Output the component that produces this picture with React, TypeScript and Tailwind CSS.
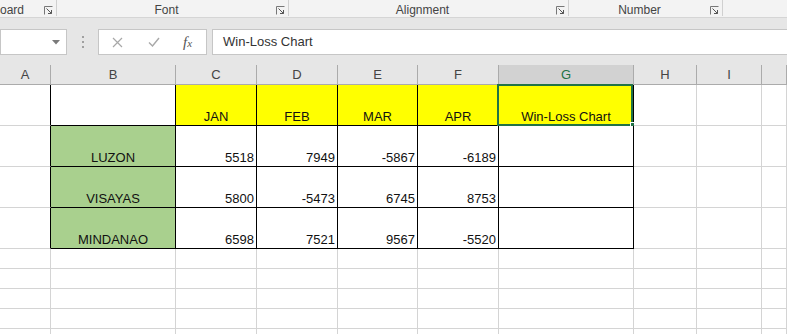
import React from 'react'

const COLS = [
  { letter: 'A', w: 'w-[51px]' },
  { letter: 'B', w: 'w-[125px]' },
  { letter: 'C', w: 'w-[81px]' },
  { letter: 'D', w: 'w-[81px]' },
  { letter: 'E', w: 'w-[80px]' },
  { letter: 'F', w: 'w-[81px]' },
  { letter: 'G', w: 'w-[135px]' },
  { letter: 'H', w: 'w-[63px]' },
  { letter: 'I', w: 'w-[65px]' },
  { letter: '', w: 'flex-1' },
]

type Cell = { v: string; kind?: 'label' | 'month' | 'num' | 'title' }

const TABLE: Cell[][] = [
  [{ v: '' }, { v: 'JAN', kind: 'month' }, { v: 'FEB', kind: 'month' }, { v: 'MAR', kind: 'month' }, { v: 'APR', kind: 'month' }, { v: 'Win-Loss Chart', kind: 'title' }],
  [{ v: 'LUZON', kind: 'label' }, { v: '5518', kind: 'num' }, { v: '7949', kind: 'num' }, { v: '-5867', kind: 'num' }, { v: '-6189', kind: 'num' }, { v: '' }],
  [{ v: 'VISAYAS', kind: 'label' }, { v: '5800', kind: 'num' }, { v: '-5473', kind: 'num' }, { v: '6745', kind: 'num' }, { v: '8753', kind: 'num' }, { v: '' }],
  [{ v: 'MINDANAO', kind: 'label' }, { v: '6598', kind: 'num' }, { v: '7521', kind: 'num' }, { v: '9567', kind: 'num' }, { v: '-5520', kind: 'num' }, { v: '' }],
]

function Launcher() {
  return (
    <svg width="9" height="9" viewBox="0 0 9 9" className="shrink-0">
      <path d="M0.5 8.5 V0.5 H8.5" fill="none" stroke="#777" strokeWidth="1" />
      <path d="M2.5 2.5 L7.5 7.5 M7.5 4 V7.5 H4" fill="none" stroke="#555" strokeWidth="1" />
    </svg>
  )
}

function RibbonGroup({ label, width, align = 'center' }: { label: string; width: string; align?: 'center' | 'left' }) {
  return (
    <div className={`flex h-[16px] items-end border-r border-[#d0d0d0] pr-[3px] ${width}`}>
      <span className={`flex-1 leading-none ${align === 'center' ? 'text-center' : 'text-left'}`}>{label}</span>
      <div className="mb-[1px]">
        <Launcher />
      </div>
    </div>
  )
}

function cellClass(r: number, c: number) {
  const inTable = r < 4 && c >= 1 && c <= 6
  const right = inTable || (r < 4 && c === 0) ? 'border-r-black' : 'border-r-[#d4d4d4]'
  const bottom = inTable ? 'border-b-black' : 'border-b-[#d4d4d4]'
  let bg = 'bg-white'
  if (inTable && r === 0 && c >= 2) bg = 'bg-[#ffff00]'
  if (inTable && r >= 1 && c === 1) bg = 'bg-[#a9d08e]'
  return `${right} ${bottom} ${bg}`
}

export default function App() {
  const rowHeights = ['h-[41px]', 'h-[41px]', 'h-[41px]', 'h-[41px]', 'h-[20px]', 'h-[20px]', 'h-[20px]', 'h-[20px]', 'h-[20px]']

  return (
    <div className="h-[334px] w-[787px] overflow-hidden bg-white font-['Liberation_Sans',Arial,sans-serif] text-[13px] text-[#222]">
      {/* Ribbon group labels */}
      <div className="flex h-[18px] border-b border-[#d5d5d5] bg-[#f3f3f3] text-[12px] text-[#444]">
        <RibbonGroup label="oard" width="w-[57px]" align="left" />
        <RibbonGroup label="Font" width="w-[232px]" />
        <RibbonGroup label="Alignment" width="w-[280px]" />
        <RibbonGroup label="Number" width="w-[154px]" />
        <div className="flex-1" />
      </div>

      <div className="h-[11px] bg-[#e6e6e6]" />

      {/* Formula bar */}
      <div className="flex h-[26px] bg-[#e6e6e6]">
        <div className="flex w-[67px] items-center justify-end border border-[#c6c6c6] bg-white pr-[6px]">
          <svg width="8" height="5" viewBox="0 0 8 5">
            <path d="M0 0 H8 L4 4.5 Z" fill="#7a7a7a" />
          </svg>
        </div>
        <div className="flex w-[31px] flex-col items-center justify-center gap-[3px]">
          <span className="h-[2px] w-[2px] bg-[#a0a0a0]" />
          <span className="h-[2px] w-[2px] bg-[#a0a0a0]" />
          <span className="h-[2px] w-[2px] bg-[#a0a0a0]" />
        </div>
        <div className="flex w-[109px] items-center border border-[#c6c6c6] bg-white">
          <svg width="11" height="11" viewBox="0 0 11 11" className="ml-[13px]">
            <path d="M1 1 L10 10 M10 1 L1 10" stroke="#a8a8a8" strokeWidth="1.2" />
          </svg>
          <svg width="12" height="10" viewBox="0 0 12 10" className="ml-[25px]">
            <path d="M1 5.5 L4.5 9 L11 1" fill="none" stroke="#a8a8a8" strokeWidth="1.4" />
          </svg>
          <span className="ml-[23px] font-['Liberation_Serif',serif] text-[15px] italic leading-none text-[#555]">
            f<span className="text-[11px]">x</span>
          </span>
        </div>
        <div className="ml-[5px] flex flex-1 items-center border-y border-l border-[#c6c6c6] bg-white pl-[10px] text-[13px] text-[#333]">
          Win-Loss Chart
        </div>
      </div>

      <div className="h-[10px] bg-[#e6e6e6]" />

      {/* Column headers */}
      <div className="flex h-[20px] border-b border-[#ababab] bg-[#e6e6e6] text-[13px] text-[#444]">
        {COLS.map((col, i) => (
          <div
            key={i}
            className={`${col.w} flex items-center justify-center border-r border-[#ababab] ${
              col.letter === 'G' ? 'bg-[#d2d2d2] text-[#217346]' : ''
            }`}
          >
            {col.letter}
          </div>
        ))}
      </div>

      {/* Grid */}
      {rowHeights.map((h, r) => (
        <div key={r} className={`flex ${h}`}>
          {COLS.map((col, c) => {
            const cell = r < 4 && c >= 1 && c <= 6 ? TABLE[r][c - 1] : { v: '' }
            const align =
              cell.kind === 'num' ? 'justify-end pr-[2px]' : cell.kind ? 'justify-center' : ''
            const selected = r === 0 && c === 6
            return (
              <div
                key={c}
                className={`${col.w} relative flex items-end border-r border-b pb-[1px] leading-[15px] text-[#111] ${align} ${cellClass(r, c)}`}
              >
                {cell.v}
                {selected && (
                  <>
                    <div className="pointer-events-none absolute -top-[1px] -left-[2px] right-0 -bottom-[1px] border-2 border-[#217346]" />
                    <div className="absolute -right-[3px] -bottom-[3px] h-[6px] w-[6px] border border-white bg-[#217346]" />
                  </>
                )}
              </div>
            )
          })}
        </div>
      ))}
    </div>
  )
}
